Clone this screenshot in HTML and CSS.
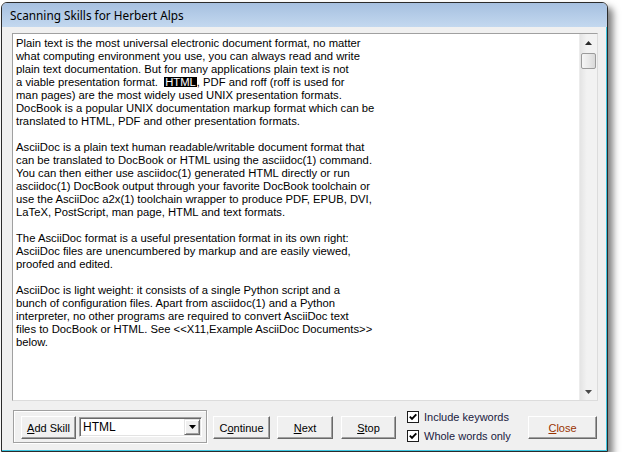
FILE: index.html
```html
<!DOCTYPE html>
<html>
<head>
<meta charset="utf-8">
<title>Scanning Skills for Herbert Alps</title>
<link rel="stylesheet" href="styles.css">
</head>
<body>
<div class="window">
  <div class="titlebar"><span class="title">Scanning Skills for Herbert Alps</span></div>
  <div class="client">
    <div class="textbox">
      <div class="text">
        <div class="para">
          <div class="ln">Plain text is the most universal electronic document format, no matter</div>
          <div class="ln">what computing environment you use, you can always read and write</div>
          <div class="ln">plain text documentation. But for many applications plain text is not</div>
          <div class="ln">a viable presentation format.&nbsp; <span class="hl">HTML</span>, PDF and roff (roff is used for</div>
          <div class="ln">man pages) are the most widely used UNIX presentation formats.</div>
          <div class="ln">DocBook is a popular UNIX documentation markup format which can be</div>
          <div class="ln">translated to HTML, PDF and other presentation formats.</div>
        </div>
        <div class="para">
          <div class="ln">AsciiDoc is a plain text human readable/writable document format that</div>
          <div class="ln">can be translated to DocBook or HTML using the asciidoc(1) command.</div>
          <div class="ln">You can then either use asciidoc(1) generated HTML directly or run</div>
          <div class="ln">asciidoc(1) DocBook output through your favorite DocBook toolchain or</div>
          <div class="ln">use the AsciiDoc a2x(1) toolchain wrapper to produce PDF, EPUB, DVI,</div>
          <div class="ln">LaTeX, PostScript, man page, HTML and text formats.</div>
        </div>
        <div class="para">
          <div class="ln">The AsciiDoc format is a useful presentation format in its own right:</div>
          <div class="ln">AsciiDoc files are unencumbered by markup and are easily viewed,</div>
          <div class="ln">proofed and edited.</div>
        </div>
        <div class="para">
          <div class="ln">AsciiDoc is light weight: it consists of a single Python script and a</div>
          <div class="ln">bunch of configuration files. Apart from asciidoc(1) and a Python</div>
          <div class="ln">interpreter, no other programs are required to convert AsciiDoc text</div>
          <div class="ln">files to DocBook or HTML. See &lt;&lt;X11,Example AsciiDoc Documents&gt;&gt;</div>
          <div class="ln">below.</div>
        </div>
      </div>
      <div class="vscroll">
        <div class="sbtn"><svg width="7" height="4" viewBox="0 0 7 4"><path d="M0 4 L3.5 0 L7 4 Z" fill="#2a2a2a"/></svg></div>
        <div class="thumb"></div>
        <div class="track"></div>
        <div class="sbtn"><svg width="7" height="4" viewBox="0 0 7 4"><path d="M0 0 L7 0 L3.5 4 Z" fill="#4a4a4a"/></svg></div>
      </div>
    </div>
    <div class="controls">
      <div class="group">
        <button class="btn btn-add"><u>A</u>dd Skill</button>
        <div class="combo">
          <span class="combo-value">HTML</span>
          <span class="dropbtn"><svg width="7" height="4" viewBox="0 0 7 4"><path d="M0 0 L7 0 L3.5 4 Z" fill="#000"/></svg></span>
        </div>
      </div>
      <button class="btn btn-continue">C<u>o</u>ntinue</button>
      <button class="btn btn-next"><u>N</u>ext</button>
      <button class="btn btn-stop"><u>S</u>top</button>
      <div class="checks">
        <div class="check"><svg class="box" width="12" height="12" viewBox="0 0 12 12"><rect x="0.5" y="0.5" width="11" height="11" fill="#fff" stroke="#1c1c1c"/><path d="M2.8 5.6 L5 7.8 L9.3 3.3" stroke="#000" stroke-width="1.9" fill="none"/></svg><span>Include keywords</span></div>
        <div class="check"><svg class="box" width="12" height="12" viewBox="0 0 12 12"><rect x="0.5" y="0.5" width="11" height="11" fill="#fff" stroke="#1c1c1c"/><path d="M2.8 5.6 L5 7.8 L9.3 3.3" stroke="#000" stroke-width="1.9" fill="none"/></svg><span>Whole words only</span></div>
      </div>
      <button class="btn btn-close"><u>C</u>lose</button>
    </div>
  </div>
</div>
</body>
</html>
```
FILE: styles.css
```css
html, body {
  margin: 0;
  padding: 0;
  background: #ffffff;
}

body {
  font-family: "Liberation Sans", Arial, sans-serif;
  color: #000;
}

.window {
  box-sizing: border-box;
  margin: 2px 0 0 1px;
  width: 607px;
  height: 450px;
  border: 1px solid #2b2b2b;
  border-radius: 6px 6px 0 0;
  background: #f0f0f0;
  box-shadow: 5px 5px 7px rgba(0, 0, 0, 0.5);
  display: flex;
  flex-direction: column;
  overflow: hidden;
}

.titlebar {
  flex: none;
  height: 24px;
  padding-left: 8px;
  display: flex;
  align-items: center;
  background: linear-gradient(#a6c0e0, #c3d8ef);
  font-family: "Noto Sans", "Open Sans", sans-serif;
  font-size: 11.8px;
  color: #000;
}

.client {
  flex: 1;
  display: flex;
  flex-direction: column;
  padding: 6px 8px 0 10px;
  border-right: 1px solid #3ec6e0;
  border-bottom: 1px solid #3ec6e0;
}

.textbox {
  box-sizing: border-box;
  height: 368px;
  border: 1px solid;
  border-color: #a0a0a0 #dcdcdc #dcdcdc #a0a0a0;
  background: #fff;
  display: flex;
}

.text {
  flex: 1;
  padding: 3px 0 0 3px;
  font-family: "Liberation Sans", Arial, sans-serif;
  font-size: 11.25px;
  line-height: 13px;
  overflow: hidden;
}

.para {
  margin: 0 0 13px;
}

.ln {
  height: 13px;
  white-space: pre;
}

.hl {
  display: inline-block;
  line-height: 10px;
  padding: 0 1px;
  background: #000;
  color: #fff;
}

.vscroll {
  width: 17px;
  flex: none;
  display: flex;
  flex-direction: column;
  background: linear-gradient(to right, #e4e4e4, #f2f2f2 40%, #f2f2f2);
  border-left: 1px solid #ececec;
}

.sbtn {
  height: 17px;
  display: flex;
  align-items: center;
  justify-content: center;
}

.thumb {
  box-sizing: border-box;
  height: 16px;
  margin: 2px 1px 0 1px;
  border: 1px solid #9b9b9b;
  border-radius: 2px;
  background: linear-gradient(to right, #f6f6f6, #e9e9e9 50%, #d9d9d9);
}

.track {
  flex: 1;
}

.controls {
  display: flex;
  align-items: flex-start;
  margin-top: 9px;
  height: 33px;
}

.group {
  box-sizing: border-box;
  width: 194px;
  height: 33px;
  margin-left: 1px;
  padding: 5px 0 0 7px;
  border: 1px solid #a0a0a0;
  box-shadow: inset 1px 1px 0 #fff, 1px 1px 0 #fff;
  display: flex;
  align-items: flex-start;
}

.btn {
  box-sizing: border-box;
  height: 23px;
  padding: 0;
  margin: 0;
  font-family: "Liberation Sans", Arial, sans-serif;
  font-size: 11px;
  color: #000;
  background: #f0f0f0;
  border: 1px solid;
  border-color: #fff #696969 #696969 #fff;
  box-shadow: inset -1px -1px 0 #a0a0a0;
  border-radius: 0;
}

.btn u {
  text-underline-offset: 1px;
}

.btn-add { width: 55px; }

.combo {
  box-sizing: border-box;
  width: 123px;
  height: 20px;
  margin: 1px 0 0 3px;
  border: 1px solid;
  border-color: #a0a0a0 #fff #fff #a0a0a0;
  box-shadow: inset 1px 1px 0 #696969, inset -1px -1px 0 #e3e3e3;
  background: #fff;
  display: flex;
  align-items: center;
}

.combo-value {
  flex: 1;
  padding-left: 3px;
  font-size: 12px;
}

.dropbtn {
  box-sizing: border-box;
  width: 16px;
  height: 16px;
  margin-right: 1px;
  background: #f0f0f0;
  border: 1px solid;
  border-color: #e3e3e3 #696969 #696969 #e3e3e3;
  box-shadow: inset 1px 1px 0 #fff, inset -1px -1px 0 #a0a0a0;
  display: flex;
  align-items: center;
  justify-content: center;
}

.btn-continue { width: 57px; margin: 6px 0 0 6px; }
.btn-next { width: 56px; margin: 6px 0 0 7px; }
.btn-stop { width: 55px; margin: 6px 0 0 8px; }

.checks {
  margin: -3px 0 0 11px;
  display: flex;
  flex-direction: column;
}

.check {
  height: 19px;
  display: flex;
  align-items: center;
  font-size: 11px;
  color: #1a1a40;
}

.check .box {
  flex: none;
  margin-right: 5px;
}

.btn-close {
  width: 69px;
  margin: 6px 1px 0 auto;
  color: #993300;
}
```
